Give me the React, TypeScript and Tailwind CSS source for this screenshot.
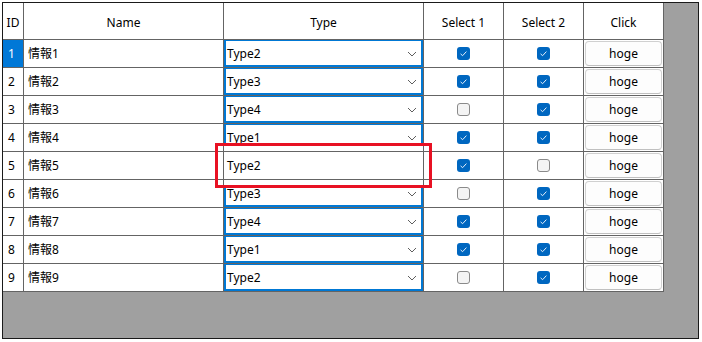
import React from "react";

const rows = [
  { id: 1, name: "情報1", type: "Type2", s1: true, s2: true },
  { id: 2, name: "情報2", type: "Type3", s1: true, s2: true },
  { id: 3, name: "情報3", type: "Type4", s1: false, s2: true },
  { id: 4, name: "情報4", type: "Type1", s1: true, s2: true },
  { id: 5, name: "情報5", type: "Type2", s1: true, s2: false },
  { id: 6, name: "情報6", type: "Type3", s1: false, s2: true },
  { id: 7, name: "情報7", type: "Type4", s1: true, s2: true },
  { id: 8, name: "情報8", type: "Type1", s1: true, s2: true },
  { id: 9, name: "情報9", type: "Type2", s1: false, s2: true },
];

const font = { fontFamily: '"Noto Sans", "Noto Sans CJK JP", sans-serif' };

function Check({ on }: { on: boolean }) {
  if (on) {
    return (
      <div className="w-[13px] h-[13px] rounded-[3px] bg-[#0067c0] flex items-center justify-center">
        <svg width="13" height="13" viewBox="0 0 13 13">
          <path d="M3.6 6.9 L5.6 8.7 L9.4 4.6" fill="none" stroke="#e8f0fa" strokeWidth="1" />
        </svg>
      </div>
    );
  }
  return <div className="w-[13px] h-[13px] rounded-[3px] bg-[#f4f4f4] border border-[#8a8a8a]" />;
}

function Chevron() {
  return (
    <svg width="10" height="6" viewBox="0 0 10 6" className="mr-[4px]">
      <path d="M1 1 L5 5 L9 1" fill="none" stroke="#5f5f5f" strokeWidth="1" />
    </svg>
  );
}

const cell = "bg-white border-r border-b border-[#646464] h-[28px] text-[12px] text-black";

export default function App() {
  return (
    <div className="w-[702px] h-[342px] bg-white pt-[2px] pl-[2px] relative" style={font}>
      <div className="w-[697px] h-[337px] border border-[#1a1a1a] bg-[#a0a0a0]">
        <div className="grid grid-cols-[21px_200px_200px_80px_80px_80px] w-[661px]">
          {["ID", "Name", "Type", "Select 1", "Select 2", "Click"].map((h) => (
            <div
              key={h}
              className="bg-white border-r border-b border-[#646464] h-[37px] pt-[4px] flex items-center justify-center text-[12px] text-black"
            >
              {h}
            </div>
          ))}
          {rows.map((r) => (
            <React.Fragment key={r.id}>
              <div
                className={`${cell} flex items-center pl-[5px] pt-[1px] ${
                  r.id === 1 ? "!bg-[#0078d7] !text-white" : ""
                }`}
              >
                {r.id}
              </div>
              <div className={`${cell} flex items-center pl-[4px] pt-[1px]`}>{r.name}</div>
              <div className={`${cell} flex items-stretch`}>
                {r.id === 5 ? (
                  <div className="flex items-center pl-[3px] pt-[1px] w-full">{r.type}</div>
                ) : (
                  <div className="flex-1 flex items-center justify-between border-2 border-[#0078d4] pl-[1px] pt-[1px] border-t-[1px]">
                    <span>{r.type}</span>
                    <Chevron />
                  </div>
                )}
              </div>
              <div className={`${cell} flex items-center justify-center`}>
                <Check on={r.s1} />
              </div>
              <div className={`${cell} flex items-center justify-center`}>
                <Check on={r.s2} />
              </div>
              <div className={`${cell} p-[1px]`}>
                <div className="w-full h-full rounded-[4px] border border-[#d0d0d0] border-b-[#c0c0c0] bg-[#fdfdfd] pt-[1px] flex items-center justify-center">
                  hoge
                </div>
              </div>
            </React.Fragment>
          ))}
        </div>
      </div>
      <div className="absolute left-[215px] top-[143px] w-[217px] h-[45px] border-[3px] border-[#e81123]">
        <div className="absolute left-[6px] top-0 w-[199px] h-[5px] bg-white" />
        <div className="absolute left-[6px] top-[34px] w-[199px] h-[5px] bg-white" />
      </div>
    </div>
  );
}
